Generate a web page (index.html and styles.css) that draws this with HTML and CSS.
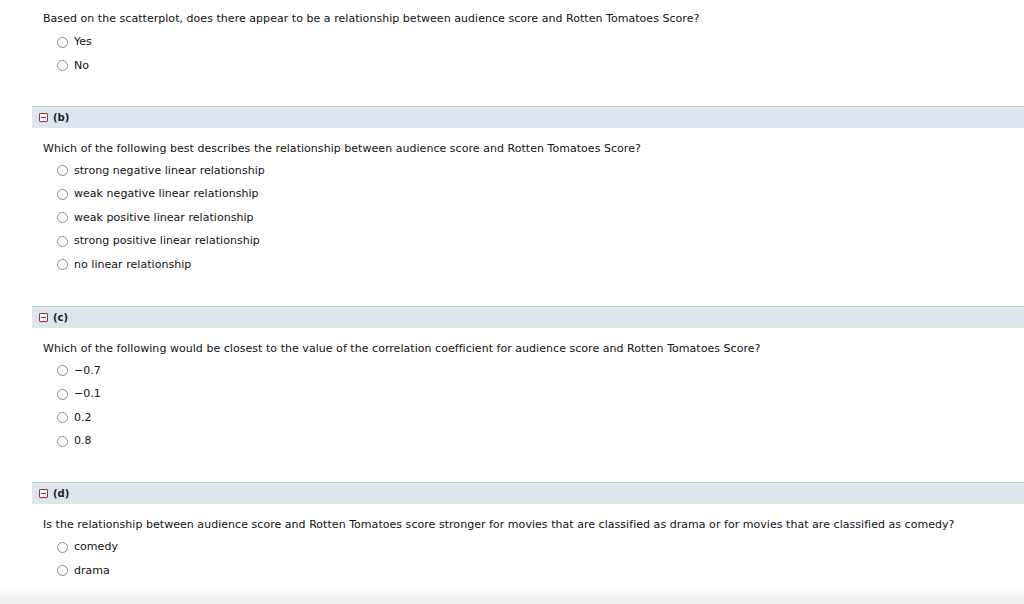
FILE: index.html
```html
<!DOCTYPE html>
<html>
<head>
<meta charset="utf-8">
<link rel="stylesheet" href="styles.css">
</head>
<body>
<div class="page">
  <div class="part first">
    <div class="question">Based on the scatterplot, does there appear to be a relationship between audience score and Rotten Tomatoes Score?</div>
    <ul class="options">
      <li><span class="radio"></span>Yes</li>
      <li><span class="radio"></span>No</li>
    </ul>
  </div>

  <div class="part-head"><span class="toggle"></span><span class="label">(b)</span></div>
  <div class="part">
    <div class="question">Which of the following best describes the relationship between audience score and Rotten Tomatoes Score?</div>
    <ul class="options">
      <li><span class="radio"></span>strong negative linear relationship</li>
      <li><span class="radio"></span>weak negative linear relationship</li>
      <li><span class="radio"></span>weak positive linear relationship</li>
      <li><span class="radio"></span>strong positive linear relationship</li>
      <li><span class="radio"></span>no linear relationship</li>
    </ul>
  </div>

  <div class="part-head"><span class="toggle"></span><span class="label">(c)</span></div>
  <div class="part">
    <div class="question">Which of the following would be closest to the value of the correlation coefficient for audience score and Rotten Tomatoes Score?</div>
    <ul class="options">
      <li><span class="radio"></span>&minus;0.7</li>
      <li><span class="radio"></span>&minus;0.1</li>
      <li><span class="radio"></span>0.2</li>
      <li><span class="radio"></span>0.8</li>
    </ul>
  </div>

  <div class="part-head"><span class="toggle"></span><span class="label">(d)</span></div>
  <div class="part">
    <div class="question">Is the relationship between audience score and Rotten Tomatoes score stronger for movies that are classified as drama or for movies that are classified as comedy?</div>
    <ul class="options">
      <li><span class="radio"></span>comedy</li>
      <li><span class="radio"></span>drama</li>
    </ul>
  </div>
</div>
<div class="fade"></div>
</body>
</html>
```
FILE: styles.css
```css
html, body {
  margin: 0;
  padding: 0;
  background: #fff;
}
body {
  font-family: "DejaVu Sans", Verdana, sans-serif;
  font-size: 11px;
  letter-spacing: 0.04px;
  color: #111;
  height: 604px;
  overflow: hidden;
  position: relative;
}
.page {
  padding-left: 32px;
}
.part {
  padding: 14px 0 34px 11px;
}
.part.first {
  padding-top: 12px;
  padding-bottom: 33px;
}
.part.first .options {
  margin-top: 9px;
}
.question {
  line-height: 14px;
}
.options {
  list-style: none;
  margin: 8px 0 0 0;
  padding: 0 0 0 14px;
}
.options li {
  display: flex;
  align-items: center;
  height: 14px;
  margin-bottom: 9.5px;
  line-height: 14px;
}
.options li:last-child {
  margin-bottom: 0;
}
.radio {
  width: 9px;
  height: 9px;
  border: 1px solid #8a8a8a;
  border-radius: 50%;
  margin-right: 6px;
  background: #fff;
  flex: none;
}
.part-head {
  background: #dce4ed;
  border-top: 1px solid #c8cdd3;
  height: 21px;
  display: flex;
  align-items: center;
  padding-left: 7px;
}
.toggle {
  width: 7px;
  height: 7px;
  border: 1px solid #a23030;
  border-radius: 1px;
  background: #fff;
  position: relative;
  margin-right: 5px;
}
.toggle::after {
  content: "";
  position: absolute;
  left: 1px;
  right: 1px;
  top: 3px;
  height: 1px;
  background: #a23030;
}
.label {
  font-weight: bold;
  font-size: 10px;
  color: #222;
}
.fade {
  position: absolute;
  left: 0;
  right: 0;
  bottom: 0;
  height: 16px;
  background: linear-gradient(to bottom, rgba(240,240,240,0), rgba(236,236,236,1));
}
```
